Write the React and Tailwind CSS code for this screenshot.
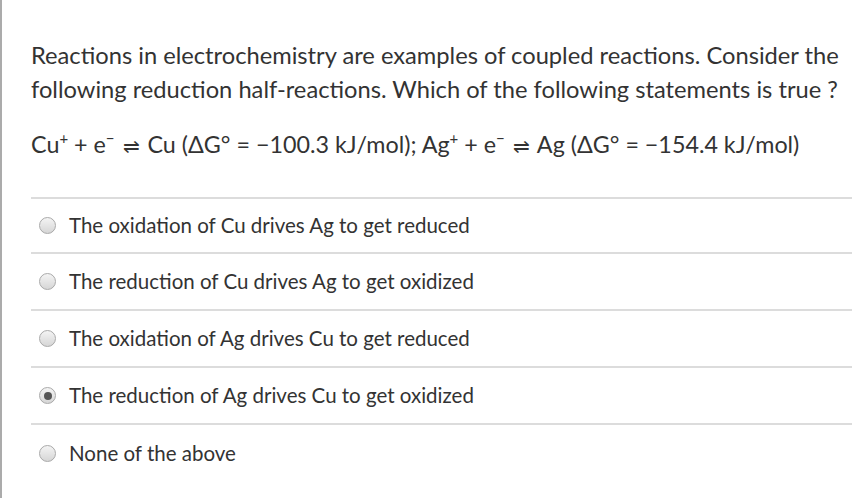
import React from "react";

const options = [
    "The oxidation of Cu drives Ag to get reduced",
    "The reduction of Cu drives Ag to get oxidized",
    "The oxidation of Ag drives Cu to get reduced",
    "The reduction of Ag drives Cu to get oxidized",
    "None of the above",
];

function Radio({ checked }) {
    return (
        <span className="relative flex h-[17px] w-[17px] flex-shrink-0 items-center justify-center rounded-full border border-[#a9a9a9] bg-gradient-to-b from-[#f4f4f4] to-[#d6d6d6]">
            {checked && <span className="h-[8px] w-[8px] rounded-full bg-[#555]" />}
        </span>
    );
}

function Eq() {
    return <span className="mx-[2px] inline-block text-[20px] leading-none">⇌</span>;
}

function Sup({ children }) {
    return <span className="relative top-[-9px] text-[15px] leading-none">{children}</span>;
}

export default function App() {
    return (
        <div className="h-[498px] w-[863px] overflow-hidden bg-white font-['Lato','Open_Sans',sans-serif] text-[#333]">
            <div className="h-full border-l-2 border-[#ababab] pl-[29px] pr-[11px] pt-[38px]">
                <p className="whitespace-nowrap text-[23.7px] leading-[34px]">
                    Reactions in electrochemistry are examples of coupled reactions. Consider the
                    <br />
                    following reduction half-reactions. Which of the following statements is true ?
                </p>
                <p className="mt-[21px] whitespace-nowrap text-[23.3px] leading-[34px]">
                    Cu<Sup>+</Sup> + e<Sup>−</Sup> <Eq /> Cu (ΔG° = −100.3 kJ/mol); Ag<Sup>+</Sup> + e<Sup>−</Sup> <Eq /> Ag
                    (ΔG° = −154.4 kJ/mol)
                </p>
                <ul className="mt-[36px]">
                    {options.map((opt, i) => (
                        <li
                            key={opt}
                            className={`flex h-[57px] items-center gap-[13px] pl-[8px] ${i === 0 ? "border-t-2 border-[#dcdcdc]" : ""} ${
                                i < options.length - 1 ? "border-b-2 border-[#dcdcdc]" : ""
                            }`}
                        >
                            <Radio checked={i === 3} />
                            <span className="text-[20.5px]">{opt}</span>
                        </li>
                    ))}
                </ul>
            </div>
        </div>
    );
}
